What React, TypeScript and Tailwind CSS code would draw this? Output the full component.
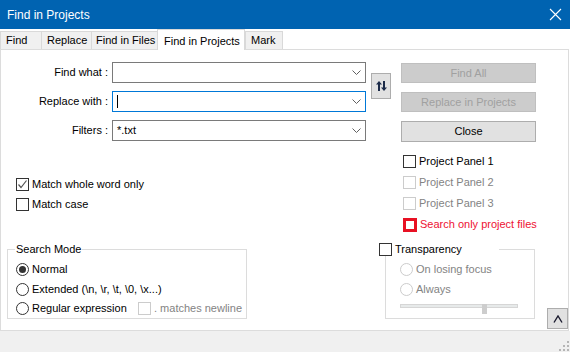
import React from 'react';

const Chevron = () => (
  <svg width="9" height="6" viewBox="0 0 9 6" className="shrink-0">
    <polyline points="0.5,0.5 4.5,4.5 8.5,0.5" fill="none" stroke="#606060" strokeWidth="1" />
  </svg>
);

const Combo = ({ value, focused, caret }: { value?: string; focused?: boolean; caret?: boolean }) => (
  <div
    className={`flex h-[21px] w-[254px] items-center justify-between border bg-white pl-[4px] pr-[4px] ${
      focused ? 'border-[#0078d7]' : 'border-[#7a7a7a]'
    }`}
  >
    <span className="flex items-center">
      {caret && <span className="mr-px inline-block h-[13px] w-px bg-black" />}
      {value}
    </span>
    <Chevron />
  </div>
);

const Check = ({
  label,
  checked,
  disabled,
  red,
}: {
  label: string;
  checked?: boolean;
  disabled?: boolean;
  red?: boolean;
}) => (
  <div className="flex items-center whitespace-nowrap">
    {red ? (
      <span className="box-border h-[14px] w-[14px] shrink-0 border-[3px] border-[#e81123] bg-white" />
    ) : (
      <span
        className={`flex h-[13px] w-[13px] shrink-0 items-center justify-center border bg-white ${
          disabled ? 'border-[#cccccc]' : 'border-[#333333]'
        }`}
      >
        {checked && (
          <svg width="11" height="11" viewBox="0 0 11 11">
            <polyline points="1.5,5.5 4,8.5 9.5,1.5" fill="none" stroke="#555" strokeWidth="1.2" />
          </svg>
        )}
      </span>
    )}
    <span
      className={`ml-[3px] ${disabled ? 'text-[#838383]' : red ? 'text-[#ee1133]' : 'text-black'}`}
    >
      {label}
    </span>
  </div>
);

const Radio = ({ label, checked, disabled }: { label: string; checked?: boolean; disabled?: boolean }) => (
  <div className="flex items-center whitespace-nowrap">
    <span
      className={`flex h-[13px] w-[13px] shrink-0 items-center justify-center rounded-full border bg-white ${
        disabled ? 'border-[#cccccc]' : 'border-[#333333]'
      }`}
    >
      {checked && <span className="h-[7px] w-[7px] rounded-full bg-[#333333]" />}
    </span>
    <span className={`ml-[3px] ${disabled ? 'text-[#838383]' : 'text-black'}`}>{label}</span>
  </div>
);

const Btn = ({ label, disabled }: { label: string; disabled?: boolean }) => (
  <div
    className={`flex w-[135px] items-center justify-center border ${
      disabled
        ? 'h-[20px] border-[#bfbfbf] bg-[#cccccc] text-[#a0a0a0]'
        : 'h-[21px] border-[#adadad] bg-[#e1e1e1] text-black'
    }`}
  >
    {label}
  </div>
);

const tabs = [
  { name: 'Find', w: 'w-[41px]' },
  { name: 'Replace', w: 'w-[50px]' },
  { name: 'Find in Files', w: 'w-[66px]' },
  { name: 'Find in Projects', w: 'w-[88px]', active: true },
  { name: 'Mark', w: 'w-[38px]' },
];

export default function App() {
  return (
    <div className="flex h-[352px] w-[570px] flex-col overflow-hidden bg-white font-['Liberation_Sans',Arial,sans-serif] text-[11px] text-black">
      {/* title bar */}
      <div className="flex h-[29px] shrink-0 items-center justify-between bg-[#0063b1] pl-[7px] pr-[8px] text-[12px] text-white">
        <span>Find in Projects</span>
        <svg width="13" height="13" viewBox="0 0 13 13">
          <path d="M1 1 L12 12 M12 1 L1 12" stroke="#fff" strokeWidth="1.1" />
        </svg>
      </div>

      {/* tabs */}
      <div className="relative z-10 flex h-[20px] shrink-0 items-end whitespace-nowrap">
        {tabs.map((t, i) =>
          t.active ? (
            <div
              key={t.name}
              className={`${t.w} -mb-px flex h-[21px] items-start border-x border-t border-[#d9d9d9] bg-white pl-[6px] pt-[3px]`}
            >
              {t.name}
            </div>
          ) : (
            <div
              key={t.name}
              className={`${t.w} flex h-[18px] items-center border-t border-l border-[#d9d9d9] bg-[#f0f0f0] ${
                i === 2 ? 'pl-[4px]' : 'pl-[5px]'
              } ${i === tabs.length - 1 ? 'border-r' : ''}`}
            >
              {t.name}
            </div>
          )
        )}
      </div>

      {/* tab page */}
      <div className="flex h-[282px] w-[569px] shrink-0 flex-col border border-[#dcdcdc] bg-white">
        <div className="flex h-[185px]">
          {/* left */}
          <div className="flex flex-col">
            <div className="flex pt-[12px]">
              <div className="flex flex-col gap-[8px]">
                <div className="flex items-center">
                  <span className="w-[108px] pr-[1px] text-right">Find what :</span>
                  <span className="ml-[3px]">
                    <Combo />
                  </span>
                </div>
                <div className="flex items-center">
                  <span className="w-[108px] pr-[1px] text-right">Replace with :</span>
                  <span className="ml-[3px]">
                    <Combo focused caret />
                  </span>
                </div>
                <div className="flex items-center">
                  <span className="w-[108px] pr-[1px] text-right">Filters :</span>
                  <span className="ml-[3px]">
                    <Combo value="*.txt" />
                  </span>
                </div>
              </div>
              <div className="ml-[5px] mt-[11px] flex h-[26px] w-[20px] items-center justify-center border border-[#adadad] bg-[#e1e1e1]">
                <svg width="11" height="10" viewBox="0 0 11 10">
                  <path d="M3 10 V2" stroke="#1b2a48" strokeWidth="2" />
                  <path d="M0 3.5 L3 0 L6 3.5 Z" fill="#1b2a48" />
                  <path d="M8 0 V8" stroke="#1b2a48" strokeWidth="2" />
                  <path d="M5 6.5 L8 10 L11 6.5 Z" fill="#1b2a48" />
                </svg>
              </div>
            </div>
            <div className="ml-[15px] mt-[35px] flex flex-col gap-[4px]">
              <div className="flex h-[16px] items-center">
                <Check label="Match whole word only" checked />
              </div>
              <div className="flex h-[16px] items-center">
                <Check label="Match case" />
              </div>
            </div>
          </div>

          {/* right */}
          <div className="ml-[10px] flex flex-col pt-[13px]">
            <Btn label="Find All" disabled />
            <div className="mt-[9px]">
              <Btn label="Replace in Projects" disabled />
            </div>
            <div className="mt-[9px]">
              <Btn label="Close" />
            </div>
            <div className="mt-[9px] ml-[2px] flex flex-col">
              <div className="flex h-[21px] items-center">
                <Check label="Project Panel 1" />
              </div>
              <div className="flex h-[21px] items-center">
                <Check label="Project Panel 2" disabled />
              </div>
              <div className="flex h-[21px] items-center">
                <Check label="Project Panel 3" disabled />
              </div>
              <div className="flex h-[21px] items-center">
                <Check label="Search only project files" red />
              </div>
            </div>
          </div>
        </div>

        {/* bottom groups */}
        <div className="flex flex-1">
          <fieldset className="ml-[6px] mt-[7px] box-border h-[77px] w-[240px] min-w-0 shrink-0 border border-[#dcdcdc] px-[8px]">
            <legend className="-ml-px px-px leading-[14px]">Search Mode</legend>
            <div className="mt-[3px] flex h-[20px] items-center">
              <Radio label="Normal" checked />
            </div>
            <div className="flex h-[20px] items-center">
              <Radio label="Extended (\n, \r, \t, \0, \x...)" />
            </div>
            <div className="flex h-[19px] items-center">
              <div className="w-[122px] shrink-0">
                <Radio label="Regular expression" />
              </div>
              <Check label=". matches newline" disabled />
            </div>
          </fieldset>

          <fieldset className="ml-[138px] mt-[7px] box-border h-[77px] w-[150px] min-w-0 shrink-0 border border-[#dcdcdc] pl-[14px]">
            <legend className="-ml-[21px] w-[120px] leading-[14px]">
              <Check label="Transparency" />
            </legend>
            <div className="mt-[3px] flex h-[20px] items-center">
              <Radio label="On losing focus" disabled />
            </div>
            <div className="flex h-[20px] items-center">
              <Radio label="Always" disabled />
            </div>
            <div className="relative mt-[5px] h-[10px] w-[118px]">
              <div className="mt-[3px] h-[4px] w-[118px] border border-[#d6d6d6] bg-[#e7eaea]" />
              <div className="absolute left-[82px] top-0 h-[10px] w-[5px] bg-[#cdcdcd]" />
            </div>
          </fieldset>

          <div className="mb-px ml-[12px] flex h-[21px] w-[21px] items-center justify-center self-end border border-[#adadad] bg-[#e1e1e1]">
            <svg width="10" height="8" viewBox="0 0 10 8">
              <polyline points="1,7.5 5,1 9,7.5" fill="none" stroke="#1a1a2e" strokeWidth="1.4" />
            </svg>
          </div>
        </div>
      </div>

      {/* status strip */}
      <div className="flex flex-1 items-end justify-end bg-[#f0f0f0] pb-[1px] pr-[1px]">
        <svg width="10" height="10" viewBox="0 0 10 10">
          <rect x="8" y="0" width="2" height="2" fill="#b5b5b5" />
          <rect x="4" y="4" width="2" height="2" fill="#b5b5b5" />
          <rect x="8" y="4" width="2" height="2" fill="#b5b5b5" />
          <rect x="0" y="8" width="2" height="2" fill="#b5b5b5" />
          <rect x="4" y="8" width="2" height="2" fill="#b5b5b5" />
          <rect x="8" y="8" width="2" height="2" fill="#b5b5b5" />
        </svg>
      </div>
    </div>
  );
}
